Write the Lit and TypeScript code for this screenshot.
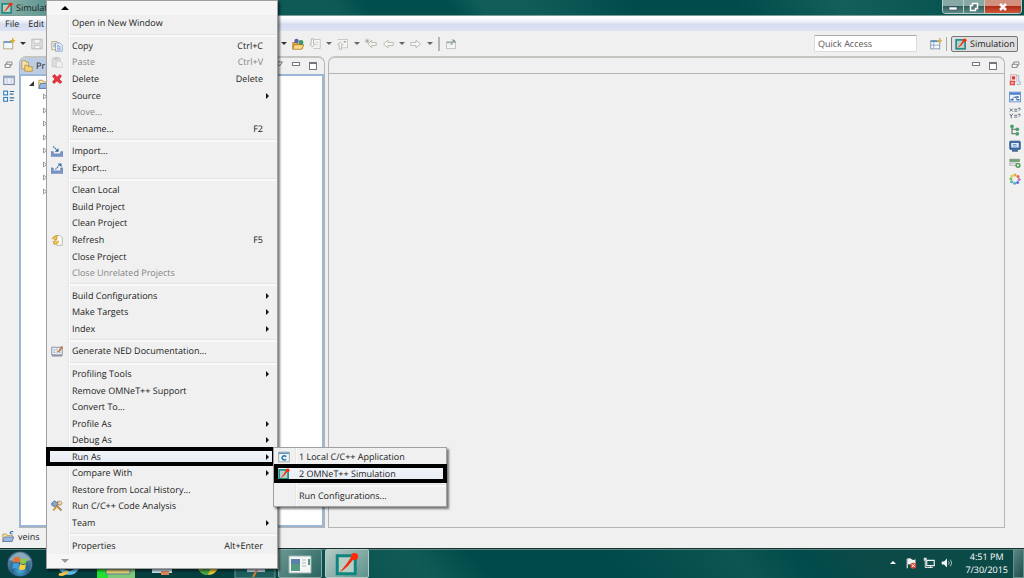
import { LitElement, html, svg, css, nothing } from "lit";
import { customElement, property } from "lit/decorators.js";
import { classMap } from "lit/directives/class-map.js";

const omnet = svg`<rect x="1.5" y="2.5" width="12" height="12" fill="#b9cfc6" stroke="#0f8580" stroke-width="2"/><path d="M3 13.500C6.500 12 10 8 12.500 4.500L11 3C9 6 6 10.500 3 13.500z" fill="#f22c10"/><circle cx="13" cy="3" r="2.400" fill="#ff2a0c"/>`;

const icons: Record<string, unknown> = {
  omnet,
  copy: svg`<path d="M1 2h7l2 2v9H1z" fill="#f4f0de" stroke="#a79a6c"/><path d="M3 5h4M3 7h4M3 9h4" stroke="#7d94bd"/><path d="M6 4h6l3 3v8H6z" fill="#eef4fd" stroke="#7c95c0"/><path d="M8 7h3M8 9h5M8 11h5M8 13h5" stroke="#6c8dc4"/>`,
  paste: svg`<rect x="1.500" y="2.500" width="11" height="12" rx="1" fill="#dedede" stroke="#c4c4c4"/><path d="M4 3q3-4 6 0v2H4z" fill="#c8c8c8"/><path d="M7 7h5l3 3v5H7z" fill="#f1f1f1" stroke="#cacaca"/>`,
  delete: svg`<path d="M2 4l3-2 3 3.500L12 2l2 2-3 4 3.500 4-2.500 2-4-3.500L4 14l-2-2 3-4z" fill="#e8343c" stroke="#c11c26" stroke-width=".8"/>`,
  import: svg`<path d="M0 9h3v3h10V9h3v6H0z" fill="#7f9dcc" stroke="#5f7db2"/><path d="M3 2l5 5" stroke="#2d62a0" stroke-width="1.500" stroke-dasharray="2 1"/><path d="M10 4v5H5z" fill="#2d62a0"/>`,
  export: svg`<path d="M0 8h3v4h10V8h3v7H0z" fill="#7f9dcc" stroke="#5f7db2"/><path d="M6 10l5-6" stroke="#2d6ca8" stroke-width="1.500" stroke-dasharray="2 1"/><path d="M9 2h5v5z" fill="#2d6ca8"/>`,
  refresh: svg`<path d="M6 2h6l3 3v10H7z" fill="#fbfaf1" stroke="#aaa58d"/><path d="M2 7q0-4 4-4l2-1v5L4 7M10 9q0 4-4 4l-2 1-1-4 3-1" fill="#f3c657" stroke="#c58e20"/>`,
  book: svg`<path d="M1 3h6l1 1 1-1h6v10H9l-1 1-1-1H1z" fill="#f5f7fb" stroke="#66718a"/><path d="M8 4v9M3 6h3M3 8h3M3 10h3M10 8h3M10 10h3" stroke="#98a3b3"/><path d="M1 14.500h14" stroke="#3d4a66"/><path d="M9 9l5-7 2 1-5 6z" fill="#d98946" stroke="#8f5524" stroke-width=".6"/>`,
  analysis: svg`<path d="M6 6l8 8" stroke="#a99561" stroke-width="3"/><path d="M3 14l7-9" stroke="#d29735" stroke-width="2.500"/><path d="M1 4l4-3 2 2 2-1v4L5 9 1 7z" fill="#8ea4c9" stroke="#4a6798"/><path d="M9 3l3-2 3 3-2 3-4-1z" fill="#f1d899" stroke="#9a8455"/>`,
  capp: svg`<rect x="1" y="1.500" width="14" height="13" fill="#eef4f8" stroke="#8b9a86"/><path d="M1 2h14v2H1z" fill="#5e96c7"/><path d="M11 7.500Q8 5 6 7.500T8 12q2 0 3-1" fill="none" stroke="#2876ab" stroke-width="2"/>`,
  wizard: svg`<rect x="1" y="4.500" width="12" height="10" fill="#f1f7fc" stroke="#aa9560"/><path d="M1 4.500h12v2H1z" fill="#5e96cf"/><path d="M13 0v7M9.500 3.500h7" stroke="#e2ae2c" stroke-width="2"/>`,
  save: svg`<path d="M1 1.500h14v13H1z" fill="#e0e0e0" stroke="#b4b4b4"/><path d="M4 2h8v5H4zM5 10h7v4H5z" fill="#f6f6f6" stroke="#bcbcbc"/>`,
  restore: svg`<path d="M5 3.500h9V9H5z" fill="#fff" stroke="#777" stroke-width="1.500"/><path d="M2 7.500h9V13H2z" fill="#fff" stroke="#6b6b6b" stroke-width="1.500"/>`,
  view: svg`<rect x="1" y="3" width="14" height="11" fill="#e9edf4" stroke="#7b8ca8" stroke-width="1.500"/><path d="M2 4.500h12" stroke="#9aabc7" stroke-width="2"/><path d="M5.500 5v9M11 5v9" stroke="#b7c1d1"/>`,
  outline: svg`<rect x="1" y="1.500" width="5" height="5" fill="#fff" stroke="#2d80c0" stroke-width="1.500"/><rect x="1" y="10" width="5" height="5" fill="#fff" stroke="#2d80c0" stroke-width="1.500"/><path d="M9 2h6M9 5.500h5M9 10.500h6M9 14h5" stroke="#2c72a8" stroke-width="1.500"/>`,
  folders: svg`<path d="M1 1h5l1 2h3v9H1z" fill="#f6e2aa" stroke="#ad8f4e"/><path d="M5 7h4l1 2h5v6H5z" fill="#f4d37d" stroke="#b58a34"/>`,
  project: svg`<path d="M1 4h5l1 2h7v8H1z" fill="#f5dfa1" stroke="#b8934b"/><path d="M3 8h13l-3 6H1z" fill="#9db8e5" stroke="#4e72b1"/><path d="M15 1q-3-1-4 1t3 2" fill="none" stroke="#2f6fae" stroke-width="1.500"/>`,
  openfolder: svg`<path d="M1 6h5l2 2h6v6H1z" fill="#e8aa31" stroke="#9c762e"/><path d="M3 9h13l-3 6H1z" fill="#ffd982" stroke="#a47522"/><circle cx="6" cy="4" r="3" fill="#6060a9"/><circle cx="12" cy="6" r="3.200" fill="#3a9862"/>`,
  stepdown: svg`<path d="M7 2h8v12H6" fill="#f4f4f2" stroke="#b8b8b4"/><path d="M3 1h3v7h2l-3.500 4L1 8h2z" fill="#fafaf5" stroke="#a9a9a0"/><path d="M9 6h3M9 9h3" stroke="#c2c2bc"/>`,
  stepup: svg`<path d="M1 2h13v11H7" fill="#f4f4f2" stroke="#b8b8b4"/><path d="M3 15h3V9h2L4.500 5 1 9h2z" fill="#fafaf5" stroke="#a9a9a0"/><path d="M9 5h3" stroke="#a5a5a0" stroke-width="2"/>`,
  lastedit: svg`<path d="M15 6v4H9v3L4 8l5-5v3z" fill="#f4f4ef" stroke="#adada6"/><path d="M3 1v6M0 4h6M1 2l4 4M5 2L1 6" stroke="#a2a2a2"/>`,
  back: svg`<path d="M15 6v4H8v3L2 8l6-5v3z" fill="#f6f6f2" stroke="#adada6"/>`,
  forward: svg`<path d="M1 6v4h7v3l6-5-6-5v3z" fill="#f6f6f2" stroke="#adada6"/>`,
  pin: svg`<path d="M2 5h12v9H2z" fill="#f3f3f3" stroke="#b0b4b8"/><path d="M2 5h8v2H2z" fill="#a5adb3"/><path d="M8 9l5-6M10 2l4 4" stroke="#80908e" stroke-width="1.500"/>`,
  perspective: svg`<rect x="1" y="3.500" width="12" height="11" fill="#f8fbfe" stroke="#67839f"/><path d="M1 4.500h12" stroke="#5f91c5" stroke-width="2"/><path d="M5 5v9M1 9.500h12" stroke="#7895b3"/><path d="M13 0v7M9.500 3.500h7" stroke="#d9b34b" stroke-width="2"/>`,
  problems: svg`<path d="M2 1h8v9H2z" fill="#f8e7e4" stroke="#c79a94"/><circle cx="6" cy="5" r="2.500" fill="#df3f3b"/><path d="M10 2h3v8h2v4h-5" fill="#dce5f3" stroke="#9aacc9"/><rect x="1" y="9" width="7" height="6" fill="#e04943"/><path d="M3 10.500l3 3M6 10.500l-3 3" stroke="#fff"/>`,
  modules: svg`<rect x=".5" y="1.500" width="15" height="13" fill="#eef4fc" stroke="#4d7fc5"/><path d="M1 2h14v3H1z" fill="#4a81cc"/><path d="M4 11l3-3h5M8 8l3 3" fill="none" stroke="#31598e"/><path d="M2 10.500h4v2H2zM10 10.500h4v2h-4zM10 7h3v2h-3z" fill="#3b6fae"/>`,
  variables: svg`<path d="M1 2l4 4M5 2L1 6M7 3h4M7 5.500h4M1 9l2 3 2-3M3 12v3M7 11h4M7 13.500h4M12 2q3-2 3 1l-2 2M12 10q3-2 3 1l-2 2" fill="none" stroke="#56637a" stroke-width="1.200"/>`,
  hierarchy: svg`<path d="M4 3v10h7M4 7h7" fill="none" stroke="#596e63" stroke-width="1.500"/><circle cx="4" cy="3" r="2.500" fill="#45a06b"/><circle cx="11" cy="7" r="2.500" fill="#45a06b"/><circle cx="11" cy="13" r="2.500" fill="#45a06b"/>`,
  console: svg`<rect x="1" y="1.500" width="14" height="11" rx="1" fill="#386aa9" stroke="#244c86"/><path d="M3 4h10v6H3z" fill="#e8f1fc"/><path d="M5 6h5M5 8h6" stroke="#5779ac"/><path d="M4 14.500h8" stroke="#30537f" stroke-width="2"/>`,
  progress: svg`<path d="M1 3h13v3H1z" fill="#65aa6f" stroke="#7c8f80"/><path d="M1 8h9v3H1z" fill="#f4f4f4" stroke="#9a9a9a"/><circle cx="12" cy="11" r="3.500" fill="#4f9b5c"/><path d="M11 9l3 2-3 2z" fill="#fff"/>`,
  palette: svg`<circle cx="8" cy="2.500" r="2" fill="#e8a534"/><circle cx="12" cy="4.500" r="2" fill="#e26355"/><circle cx="13.500" cy="8.500" r="2" fill="#bb71c0"/><circle cx="11.500" cy="12.500" r="2" fill="#5976cc"/><circle cx="7.500" cy="13.500" r="2" fill="#54a9dc"/><circle cx="3.500" cy="11.500" r="2" fill="#4fb6a1"/><circle cx="2.500" cy="7.500" r="2" fill="#7fc254"/><circle cx="4" cy="4" r="2" fill="#dcd04a"/>`,
  flag: svg`<path d="M3 2v13" stroke="#eee" stroke-width="1.500"/><path d="M4 2q3-1 5 1t5 0v7q-3 1-5 0t-5 0z" fill="#eef2f0"/><circle cx="11" cy="11.500" r="4" fill="#de4432"/><path d="M9 9.500l4 4M13 9.500l-4 4" stroke="#fff" stroke-width="1.300"/>`,
  network: svg`<path d="M5 4.500h10v7H5z" fill="#15514f" stroke="#eef4f2" stroke-width="1.500"/><path d="M10 11v3M6 14h7M3 5v9h3" stroke="#e5eeea" fill="none" stroke-width="1.300"/><path d="M1 1h4v4H1z" fill="#d6e2dd"/>`,
  speaker: svg`<path d="M1 6h3l4-4v12l-4-4H1z" fill="#f4f7f6"/><path d="M10 5.500q2 2.500 0 5M12.500 3.500q3.500 4.500 0 9" stroke="#cfe0dc" fill="none"/>`,
};

const glyph = (name: string) =>
  html`<svg class="icon" viewBox="0 0 16 16" aria-hidden="true">${icons[name]}</svg>`;

interface Entry {
  label: string;
  icon?: string;
  key?: string;
  off?: boolean;
  sub?: boolean;
  open?: Entry[];
  marked?: boolean;
  sep?: boolean;
}
const sep: Entry = { label: "", sep: true };

const runAs: Entry[] = [
  { label: "1 Local C/C++ Application", icon: "capp" },
  { label: "2 OMNeT++ Simulation", icon: "omnet", marked: true },
  sep,
  { label: "Run Configurations..." },
];

const projectMenu: Entry[] = [
  { label: "Open in New Window" },
  sep,
  { label: "Copy", icon: "copy", key: "Ctrl+C" },
  { label: "Paste", icon: "paste", key: "Ctrl+V", off: true },
  { label: "Delete", icon: "delete", key: "Delete" },
  { label: "Source", sub: true },
  { label: "Move...", off: true },
  { label: "Rename...", key: "F2" },
  sep,
  { label: "Import...", icon: "import" },
  { label: "Export...", icon: "export" },
  sep,
  { label: "Clean Local" },
  { label: "Build Project" },
  { label: "Clean Project" },
  { label: "Refresh", icon: "refresh", key: "F5" },
  { label: "Close Project" },
  { label: "Close Unrelated Projects", off: true },
  sep,
  { label: "Build Configurations", sub: true },
  { label: "Make Targets", sub: true },
  { label: "Index", sub: true },
  sep,
  { label: "Generate NED Documentation...", icon: "book" },
  sep,
  { label: "Profiling Tools", sub: true },
  { label: "Remove OMNeT++ Support" },
  { label: "Convert To..." },
  { label: "Profile As", sub: true },
  { label: "Debug As", sub: true },
  { label: "Run As", sub: true, marked: true, open: runAs },
  { label: "Compare With", sub: true },
  { label: "Restore from Local History..." },
  { label: "Run C/C++ Code Analysis", icon: "analysis" },
  { label: "Team", sub: true },
  sep,
  { label: "Properties", key: "Alt+Enter" },
];

const shared = css`
  * { box-sizing: border-box; }
  button, input { font: inherit; color: inherit; margin: 0; padding: 0; border: 0; background: none; text-rendering: inherit; }
  ul { list-style: none; margin: 0; padding: 0; }
  .icon { display: block; width: 12px; height: 12px; flex: none; }
`;

@customElement("popup-menu")
export class PopupMenu extends LitElement {
  @property({ attribute: false }) entries: Entry[] = [];
  @property({ type: Boolean }) scrolls = false;

  static styles = [
    shared,
    css`
      :host {
        display: flex;
        flex-direction: column;
        border: 1px solid #a0a0a0;
        background: linear-gradient(to right, transparent 21px, #e5e6e6 21px 22px, #fafafa 22px 23px, transparent 23px), #f0f0f0;
        box-shadow: 2px 2px 2px rgba(0, 0, 0, 0.5);
      }
      .list { flex: 1; display: flex; flex-direction: column; }
      .row { flex: 1 1 16px; min-height: 0; position: relative; display: flex; }
      .sep { flex: none; height: 6px; margin-left: 23px; padding-top: 2px; }
      .sep::before { content: ""; display: block; height: 2px; background: #f9f9f9; border-top: 1px solid #e4e4e4; }
      .item { flex: 1; display: grid; grid-template-columns: 16px 1fr auto 14px; align-items: center; padding-left: 4px; text-align: left; white-space: nowrap; line-height: 14px; }
      .label { grid-column: 2; padding-left: 5px; }
      .item .icon { grid-row: 1; grid-column: 1; }
      .arrow { grid-column: 4; justify-self: start; margin-left: 3px; border: 3px solid transparent; border-left-color: #111; border-right: 0; }
      .off { color: #858585; }
      .marked { background: linear-gradient(#f3f5f9, #e6ebf3); }
      .marked::after { content: ""; position: absolute; inset: -2px 1px -1px -1px; border: 4px solid #000; pointer-events: none; }
      .scroll { flex: none; height: 14px; background: #f6f6f6; display: flex; align-items: center; padding-left: 14px; }
      .up, .down { border: 4px solid transparent; }
      .up { border-bottom-color: #000; border-top: 0; }
      .down { border-top-color: #999; border-bottom: 0; }
      .sub { position: absolute; z-index: 2; left: calc(100% - 4px); top: -2px; width: 174px; height: 60px; }
      :host(.sub) .list { padding: 1px 0; }
      :host(.sub) .marked::after { inset: -1px -1px -1px 0; }
    `,
  ];

  row(e: Entry) {
    if (e.sep) return html`<li class="sep" role="separator"></li>`;
    return html`<li class=${classMap({ row: true, marked: !!e.marked })}>
      <button class=${classMap({ item: true, off: !!e.off })} role="menuitem" aria-disabled=${e.off ? "true" : "false"}>
        ${e.icon ? glyph(e.icon) : nothing}
        <span class="label">${e.label}</span>
        ${e.key ? html`<span>${e.key}</span>` : nothing}
        ${e.sub ? html`<span class="arrow"></span>` : nothing}
      </button>
      ${e.open ? html`<popup-menu class="sub" .entries=${e.open}></popup-menu>` : nothing}
    </li>`;
  }

  render() {
    return html`
      ${this.scrolls ? html`<button class="scroll" aria-label="Scroll up"><span class="up"></span></button>` : nothing}
      <ul class="list" role="menu">${this.entries.map((e) => this.row(e))}</ul>
      ${this.scrolls ? html`<button class="scroll" aria-label="Scroll down"><span class="down"></span></button>` : nothing}
    `;
  }
}

@customElement("app-root")
export class AppRoot extends LitElement {
  static styles = [
    shared,
    css`
      :host {
        display: flex;
        flex-direction: column;
        position: relative;
        height: 100vh;
        overflow: hidden;
        background: #f0f0f0;
        color: #1c1c1c;
        font: 9px/14px "Open Sans", "Noto Sans", sans-serif;
        text-rendering: geometricPrecision;
      }
      .title { flex: none; height: 16px; display: flex; align-items: center; gap: 3px; padding-left: 1px; border-bottom: 1px solid #7c9c9a;
        background: linear-gradient(to right, #8fb3ae 0, #5f9690 46px, transparent 110px), linear-gradient(50deg, #0f5a57 0 33%, #004f4d 36% 44%, #0f5c59 47% 52%, #004c4b 62% 72%, #145f5b 82%, #004c4b 100%); }
      .title span { flex: 1; }
      .caption { align-self: flex-start; display: flex; height: 14px; margin-right: 2px; border: 1px solid #b6cdc9; border-top: 0; border-radius: 0 0 4px 4px; overflow: hidden; }
      .caption button { width: 21px; display: grid; place-items: center; background: linear-gradient(#86a9a5 45%, #345f5e 50%, #5d8b87); border-right: 1px solid #b6cdc9; }
      .caption .close { width: 36px; border: 0; background: linear-gradient(#d3907f 45%, #b02b15 50%, #d0573c); }
      .caption svg { display: block; width: 12px; height: 10px; }
      .menubar { flex: none; height: 15px; display: flex; gap: 9px; padding: 0 5px; background: linear-gradient(#fdfdff 15%, #e4e9f6 45%, #d5dcef 55%, #dde3f3); }
      .toolbar { flex: none; height: 25px; display: flex; align-items: center; padding: 0 6px 0 3px; }
      .tool { display: block; margin-right: 5px; }
      .drop { flex: none; border: 3px solid transparent; border-top-color: #333; border-bottom: 0; margin-right: 5px; }
      .dim { border-top-color: #666; }
      .hidden-tools { width: 233px; flex: none; }
      .rule { width: 2px; height: 14px; background: #b5b5b5; margin: 0 5px 0 0; }
      .push { flex: 1; }
      .quick { width: 103px; height: 17px; padding: 0 3px; border: 1px solid #dcdcdc; border-top-color: #aaa; background: #fff; margin-right: 13px; }
      .quick::placeholder { color: #555; opacity: 1; }
      .persp { display: flex; align-items: center; gap: 3px; height: 16px; width: 67px; padding-left: 3px; border: 1px solid #777; border-radius: 2px; background: #dedede; }
      .thin { width: 1px; height: 14px; background: #aaa; margin: 0 4px 0 -1px; }
      .work { flex: 1; min-height: 0; display: flex; }
      .trim { width: 19px; flex: none; display: flex; flex-direction: column; align-items: center; gap: 4px; padding: 3px 2px 0 0; }
      .trim.right { padding: 3px 0 0 1px; }
      .trim .first { width: 9px; height: 9px; margin: 1px 0; }
      .first .icon { width: 9px; height: 9px; }
      .views { height: 111px; display: flex; flex-direction: column; justify-content: space-between; }
      .panel { display: flex; flex-direction: column; border: 1px solid #b4b4b4; border-top: 2px solid #c5c5c1; border-radius: 7px 7px 0 0; }
      .explorer { width: 306px; flex: none; margin-right: 3px; border-left-color: #9cb6d6; }
      .editor { flex: 1; }
      .tabs { flex: none; height: 16px; display: flex; align-items: center; justify-content: flex-end; gap: 9px; padding-right: 7px; border-bottom: 1px solid #b4b4b4; }
      .explorer .tabs { border: 0; border-radius: 6px 0 0 0; background: linear-gradient(to right, #bccde3 0 90px, transparent 90px); }
      .tab { flex: 1; display: flex; align-items: center; gap: 3px; padding-left: 1px; }
      .min, .max { display: block; width: 8px; border: 1px solid #777; background: #fff; }
      .min { height: 4px; margin-bottom: 4px; }
      .max { height: 8px; border-top-width: 2px; }
      .tri { width: 7px; height: 7px; margin-bottom: 3px; }
      .body { flex: 1; background: #fff; border: 2px solid #9cb6d6; border-left-width: 1px; padding-left: 7px; }
      .root { display: flex; align-items: center; gap: 3px; height: 14px; }
      .root .icon { width: 13px; height: 13px; }
      .twist { width: 7px; height: 7px; }
      .kids { height: 108px; display: flex; flex-direction: column; padding-left: 14px; }
      .kids li { flex: 1; display: flex; align-items: center; }
      .status { flex: none; height: 20px; display: flex; align-items: center; gap: 4px; padding: 0 0 2px 2px; }
      .taskbar { flex: none; height: 30px; display: flex; align-items: stretch; color: #fff; border-top: 1px solid #16302f; box-shadow: inset 0 1px 0 #5b8582;
        background: linear-gradient(50deg, #043e3d 0 20%, #0c5451 35%, #115b57 41%, #004a4a 47% 60%, #0d5552 72%, #004b4b 78%, #0c4a48 84% 100%); }
      .start { width: 46px; display: flex; justify-content: center; align-items: center; padding-right: 6px; }
      .start svg { width: 28px; height: 28px; }
      .pinned { width: 232px; display: flex; align-items: center; justify-content: space-around; }
      .pinned svg { width: 28px; height: 28px; }
      .task { width: 44px; display: grid; place-items: center; margin-right: 3px; border: 1px solid #86aaa6; border-radius: 2px; background: linear-gradient(135deg, #6c9792, #2a6560); }
      .task.on { background: linear-gradient(135deg, #b5cbc6, #5f918b); border-color: #b5cbc7; }
      .task svg { width: 24px; height: 24px; }
      .tray { display: flex; align-items: center; gap: 6px; margin-left: auto; padding-bottom: 2px; }
      .tray .up { border: 3px solid transparent; border-bottom-color: #fff; border-top: 0; margin-right: 3px; }
      .clock { text-align: center; line-height: 13px; margin: 0 5px 0 6px; }
      .peek { width: 11px; background: linear-gradient(120deg, #5b8783, #1d4e4c); border: 1px solid #66908c; }
      .context { position: absolute; z-index: 5; left: 46px; top: 0; bottom: 9px; width: 232px; }
    `,
  ];

  tool(name: string, label: string) {
    return html`<button class="tool" aria-label=${label}>${glyph(name)}</button>`;
  }

  render() {
    return html`
      <header class="title">
        ${glyph("omnet")}<span>Simulat</span>
        <div class="caption">
          <button aria-label="Minimize"><svg viewBox="0 0 12 10"><rect x="2" y="5" width="8" height="3" fill="#fff" stroke="#345" stroke-width=".6"/></svg></button>
          <button aria-label="Restore"><svg viewBox="0 0 12 10"><path d="M4.500 1.500h5v5h-2v2h-5v-5h2z" fill="#577" stroke="#fff" stroke-width="1.500"/></svg></button>
          <button class="close" aria-label="Close"><svg viewBox="0 0 12 10"><path d="M3 2l6 6M9 2L3 8" stroke="#fff" stroke-width="2.500"/></svg></button>
        </div>
      </header>
      <nav class="menubar"><button>File</button><button>Edit</button></nav>
      <div class="toolbar">
        ${this.tool("wizard", "New")}<span class="drop"></span>${this.tool("save", "Save")}
        <span class="hidden-tools"></span>
        <span class="drop"></span>${this.tool("openfolder", "Open")}
        ${this.tool("stepdown", "Next annotation")}<span class="drop dim"></span>
        ${this.tool("stepup", "Previous annotation")}<span class="drop dim"></span>
        ${this.tool("lastedit", "Last edit location")}
        ${this.tool("back", "Back")}<span class="drop dim"></span>
        ${this.tool("forward", "Forward")}<span class="drop dim"></span>
        <span class="rule"></span>${this.tool("pin", "Pin editor")}
        <span class="push"></span>
        <input class="quick" aria-label="Quick Access" placeholder="Quick Access" />
        ${this.tool("perspective", "Open perspective")}
        <span class="thin"></span>
        <button class="persp">${glyph("omnet")}Simulation</button>
      </div>
      <main class="work">
        <aside class="trim">
          <button class="first" aria-label="Restore">${glyph("restore")}</button>
          ${glyph("view")}${glyph("outline")}
        </aside>
        <section class="panel explorer">
          <div class="tabs">
            <div class="tab">${glyph("folders")}<span>Pr</span></div>
            <svg class="tri" viewBox="0 0 7 7"><path d="M.5 1h6l-3 4z" fill="#fff" stroke="#777"/></svg>
            <button class="min" aria-label="Minimize view"></button><button class="max" aria-label="Maximize view"></button>
          </div>
          <div class="body">
            <div class="root"><svg class="twist" viewBox="0 0 7 7"><path d="M6 1v5H1z" fill="#333"/></svg>${glyph("project")}</div>
            <ul class="kids">
              ${Array.from({ length: 8 }, () => html`<li><svg class="twist" viewBox="0 0 7 7"><path d="M1.500 1v5l3-2.500z" fill="#fff" stroke="#999"/></svg></li>`)}
            </ul>
          </div>
        </section>
        <section class="panel editor">
          <div class="tabs"><button class="min" aria-label="Minimize editor"></button><button class="max" aria-label="Maximize editor"></button></div>
        </section>
        <aside class="trim right">
          <button class="first" aria-label="Restore">${glyph("restore")}</button>
          <div class="views">
            ${["problems", "modules", "variables", "hierarchy", "console", "progress", "palette"].map(glyph)}
          </div>
        </aside>
      </main>
      <footer class="status">${glyph("project")}<span>veins</span></footer>
      <footer class="taskbar">
        <button class="start" aria-label="Start">
          <svg viewBox="0 0 28 28"><defs><radialGradient id="orb" cx=".5" cy=".75"><stop offset="0" stop-color="#4ab1dc"/><stop offset=".6" stop-color="#28648f"/><stop offset="1" stop-color="#4d7c94"/></radialGradient></defs>
            <circle cx="14" cy="14" r="13" fill="url(#orb)" stroke="#17364a"/><path d="M3 10Q14-5 25 10Q14 14 3 10z" fill="#fff" opacity=".35"/>
            <path d="M8 8q3-2 6 0l-1 5q-3-2-6 0z" fill="#ef6b2c"/><path d="M15 8q3 2 6 0l-1 5q-3 2-6 0z" fill="#94c83d"/><path d="M7 14q3-2 6 0l-1 5q-3-2-6 0z" fill="#3f9fe0"/><path d="M14 14q3 2 6 0l-1 5q-3 2-6 0z" fill="#ffcf33"/></svg>
        </button>
        <div class="pinned">
          <svg viewBox="0 0 28 28"><circle cx="14" cy="14" r="9" fill="none" stroke="#5fbdf0" stroke-width="4"/><path d="M4 24q4 2 9-3" stroke="#f0c14b" stroke-width="3" fill="none"/></svg>
          <svg viewBox="0 0 28 28" overflow="visible"><path d="M-5 0h38v28H-5z" fill="#80c878"/><path d="M-5 18H6v10H-5z" fill="#21e02f"/><path d="M4 19h24v5H4z" fill="#e6cf70" stroke="#507fa0"/></svg>
          <svg viewBox="0 0 28 28"><path d="M4 8h20v15H4z" fill="#c8dff0"/><path d="M13 21h8v4h-8z" fill="#dc8453"/></svg>
          <svg viewBox="0 0 28 28"><circle cx="14" cy="14" r="11" fill="#e8c632"/><path d="M5 20Q8 25 14 25L17 17z" fill="#45a444"/></svg>
          <svg viewBox="0 0 28 28" overflow="visible"><rect x="-6" y="0" width="40" height="28" fill="#1c5f5c" stroke="#6a9894"/><path d="M6 18h18v4H6z" fill="#bcd0e6"/><path d="M16 20l-4 7" stroke="#dc7c30" stroke-width="2"/></svg>
        </div>
        <button class="task" aria-label="Explorer window"><svg viewBox="0 0 24 24"><path d="M1 4h22v17H1z" fill="#f3f6f5" stroke="#9db4b0"/><path d="M3 7h9v12H3z" fill="#569b7f"/><path d="M3 7h9v5H3z" fill="#5981aa"/><path d="M14 8h4M14 11h4M14 14h4" stroke="#bbb"/><path d="M20 7h2v6h-2z" fill="#559980"/></svg></button>
        <button class="task on" aria-label="Simulation"><svg viewBox="0 0 16 16">${omnet}</svg></button>
        <div class="tray">
          <span class="up"></span>${glyph("flag")}${glyph("network")}${glyph("speaker")}
          <div class="clock"><div>4:51 PM</div><div>7/30/2015</div></div>
        </div>
        <button class="peek" aria-label="Show desktop"></button>
      </footer>
      <popup-menu class="context" scrolls .entries=${projectMenu}></popup-menu>
    `;
  }
}
